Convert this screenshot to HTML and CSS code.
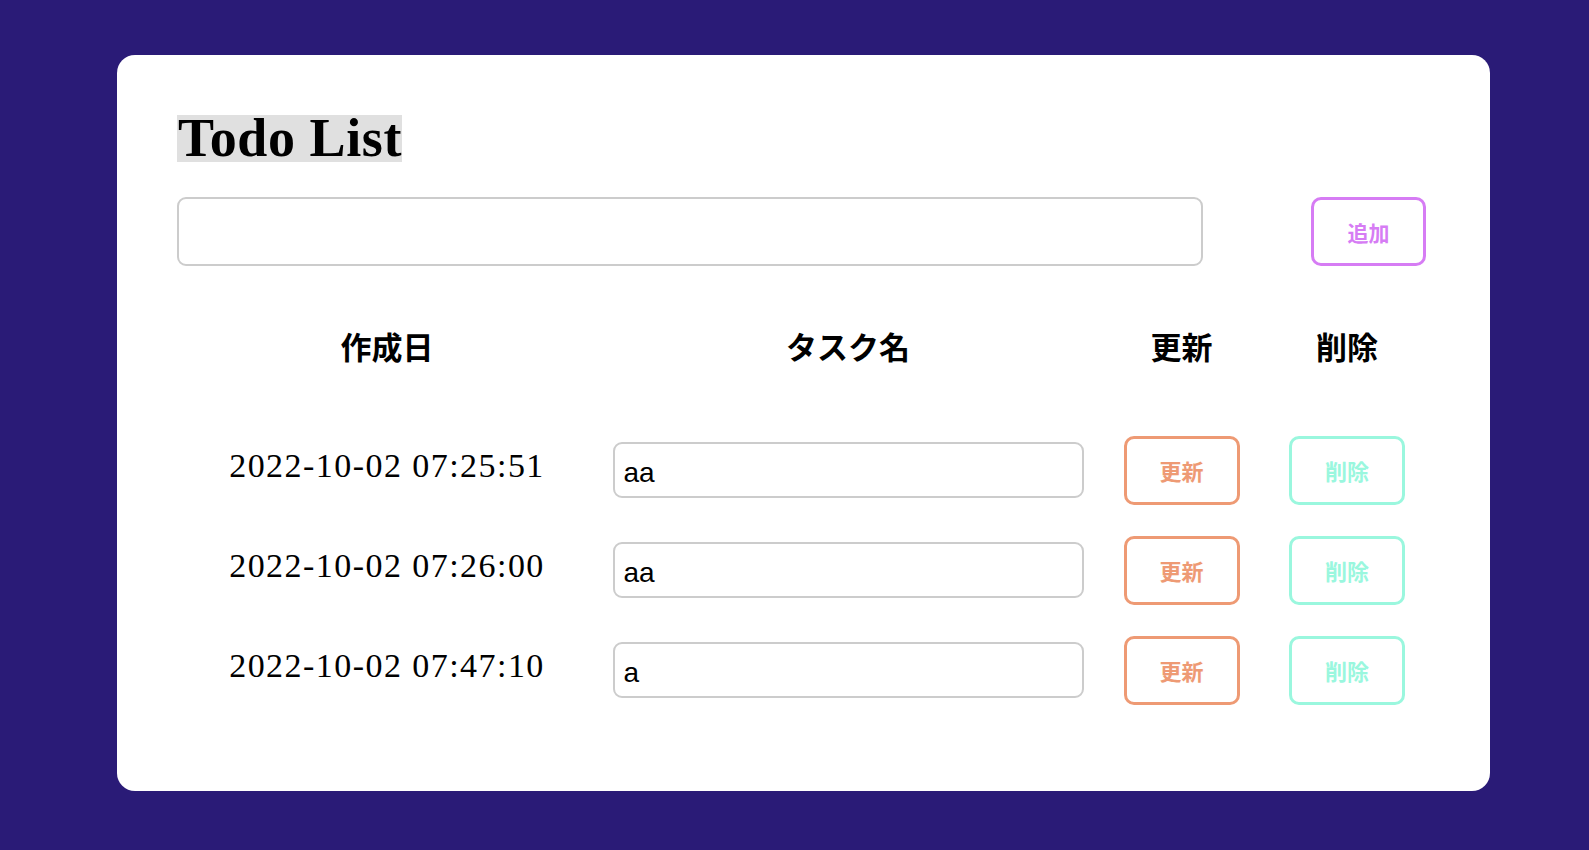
FILE: index.html
```html
<!DOCTYPE html>
<html lang="ja">
<head>
<meta charset="utf-8">
<title>Todo List</title>
<link rel="stylesheet" href="styles.css">
</head>
<body>
<div class="card">
  <h1 class="title"><span class="title-text">Todo List</span></h1>
  <div class="add-row">
    <input class="add-input" type="text" value="">
    <button class="btn btn-add">追加</button>
  </div>
  <div class="grid thead">
    <div class="th">作成日</div>
    <div class="th">タスク名</div>
    <div class="th">更新</div>
    <div class="th">削除</div>
  </div>
  <div class="grid tbody">
    <div class="row">
      <div class="cell date">2022-10-02 07:25:51</div>
      <div class="cell"><input class="task-input" type="text" value="aa"></div>
      <div class="cell"><button class="btn btn-update">更新</button></div>
      <div class="cell"><button class="btn btn-delete">削除</button></div>
    </div>
    <div class="row">
      <div class="cell date">2022-10-02 07:26:00</div>
      <div class="cell"><input class="task-input" type="text" value="aa"></div>
      <div class="cell"><button class="btn btn-update">更新</button></div>
      <div class="cell"><button class="btn btn-delete">削除</button></div>
    </div>
    <div class="row">
      <div class="cell date">2022-10-02 07:47:10</div>
      <div class="cell"><input class="task-input" type="text" value="a"></div>
      <div class="cell"><button class="btn btn-update">更新</button></div>
      <div class="cell"><button class="btn btn-delete">削除</button></div>
    </div>
  </div>
</div>
</body>
</html>
```
FILE: styles.css
```css
* { box-sizing: border-box; }

html, body {
  margin: 0;
  background: #2a1b77;
}

body {
  padding: 55px 99px 59px 117px;
  font-family: "Liberation Serif", "Noto Sans CJK JP", serif;
  color: #000;
}

.card {
  background: #ffffff;
  border-radius: 18px;
  padding: 60px 64px 71px 60px;
}

.title {
  margin: 0;
  height: 47px;
  line-height: 47px;
}

.title-text {
  display: inline-block;
  height: 47px;
  line-height: 47px;
  background: #e0e0e0;
  font-family: "Liberation Serif", serif;
  font-weight: bold;
  font-size: 54px;
  letter-spacing: 0.6px;
  padding: 0 0 0 1px;
}

.add-row {
  margin-top: 35px;
  display: flex;
  justify-content: space-between;
  align-items: center;
}

.add-input {
  width: 1026px;
  height: 69px;
  border: 2px solid #cccccc;
  border-radius: 9px;
  background: #fff;
  outline: none;
  font-size: 28px;
  font-family: "Liberation Sans", sans-serif;
  padding: 0 9px;
}

.btn {
  background: #ffffff;
  border-style: solid;
  border-width: 3px;
  border-radius: 10px;
  font-family: "Noto Sans CJK JP", sans-serif;
  font-weight: bold;
  font-size: 22px;
  width: 116px;
  height: 69px;
  padding: 0;
  cursor: pointer;
}

.btn-add {
  width: 115px;
  border-color: #d67cf4;
  color: #d67cf4;
  font-size: 21px;
}

.btn-update {
  border-color: #ee9a74;
  color: #ee9a74;
}

.btn-delete {
  border-color: #9af7de;
  color: #9af7de;
}

.grid {
  display: grid;
  grid-template-columns: 420px 502px 165px 166px;
}

.thead {
  margin-top: 59px;
}

.th {
  height: 40px;
  display: flex;
  align-items: center;
  justify-content: center;
  font-family: "Noto Sans CJK JP", serif;
  font-weight: bold;
  font-size: 31px;
}

.tbody {
  margin-top: 55px;
}

.row {
  display: contents;
}

.cell {
  height: 100px;
  display: flex;
  align-items: center;
  justify-content: center;
}

.date {
  font-family: "Liberation Serif", serif;
  font-size: 34px;
  letter-spacing: 1.45px;
  padding-bottom: 8px;
}

.task-input {
  width: 471px;
  height: 56px;
  border: 2px solid #cccccc;
  border-radius: 9px;
  background: #fff;
  outline: none;
  font-family: "Liberation Sans", sans-serif;
  font-size: 28px;
  color: #000;
  padding: 6px 9px 0 9px;
}
```
